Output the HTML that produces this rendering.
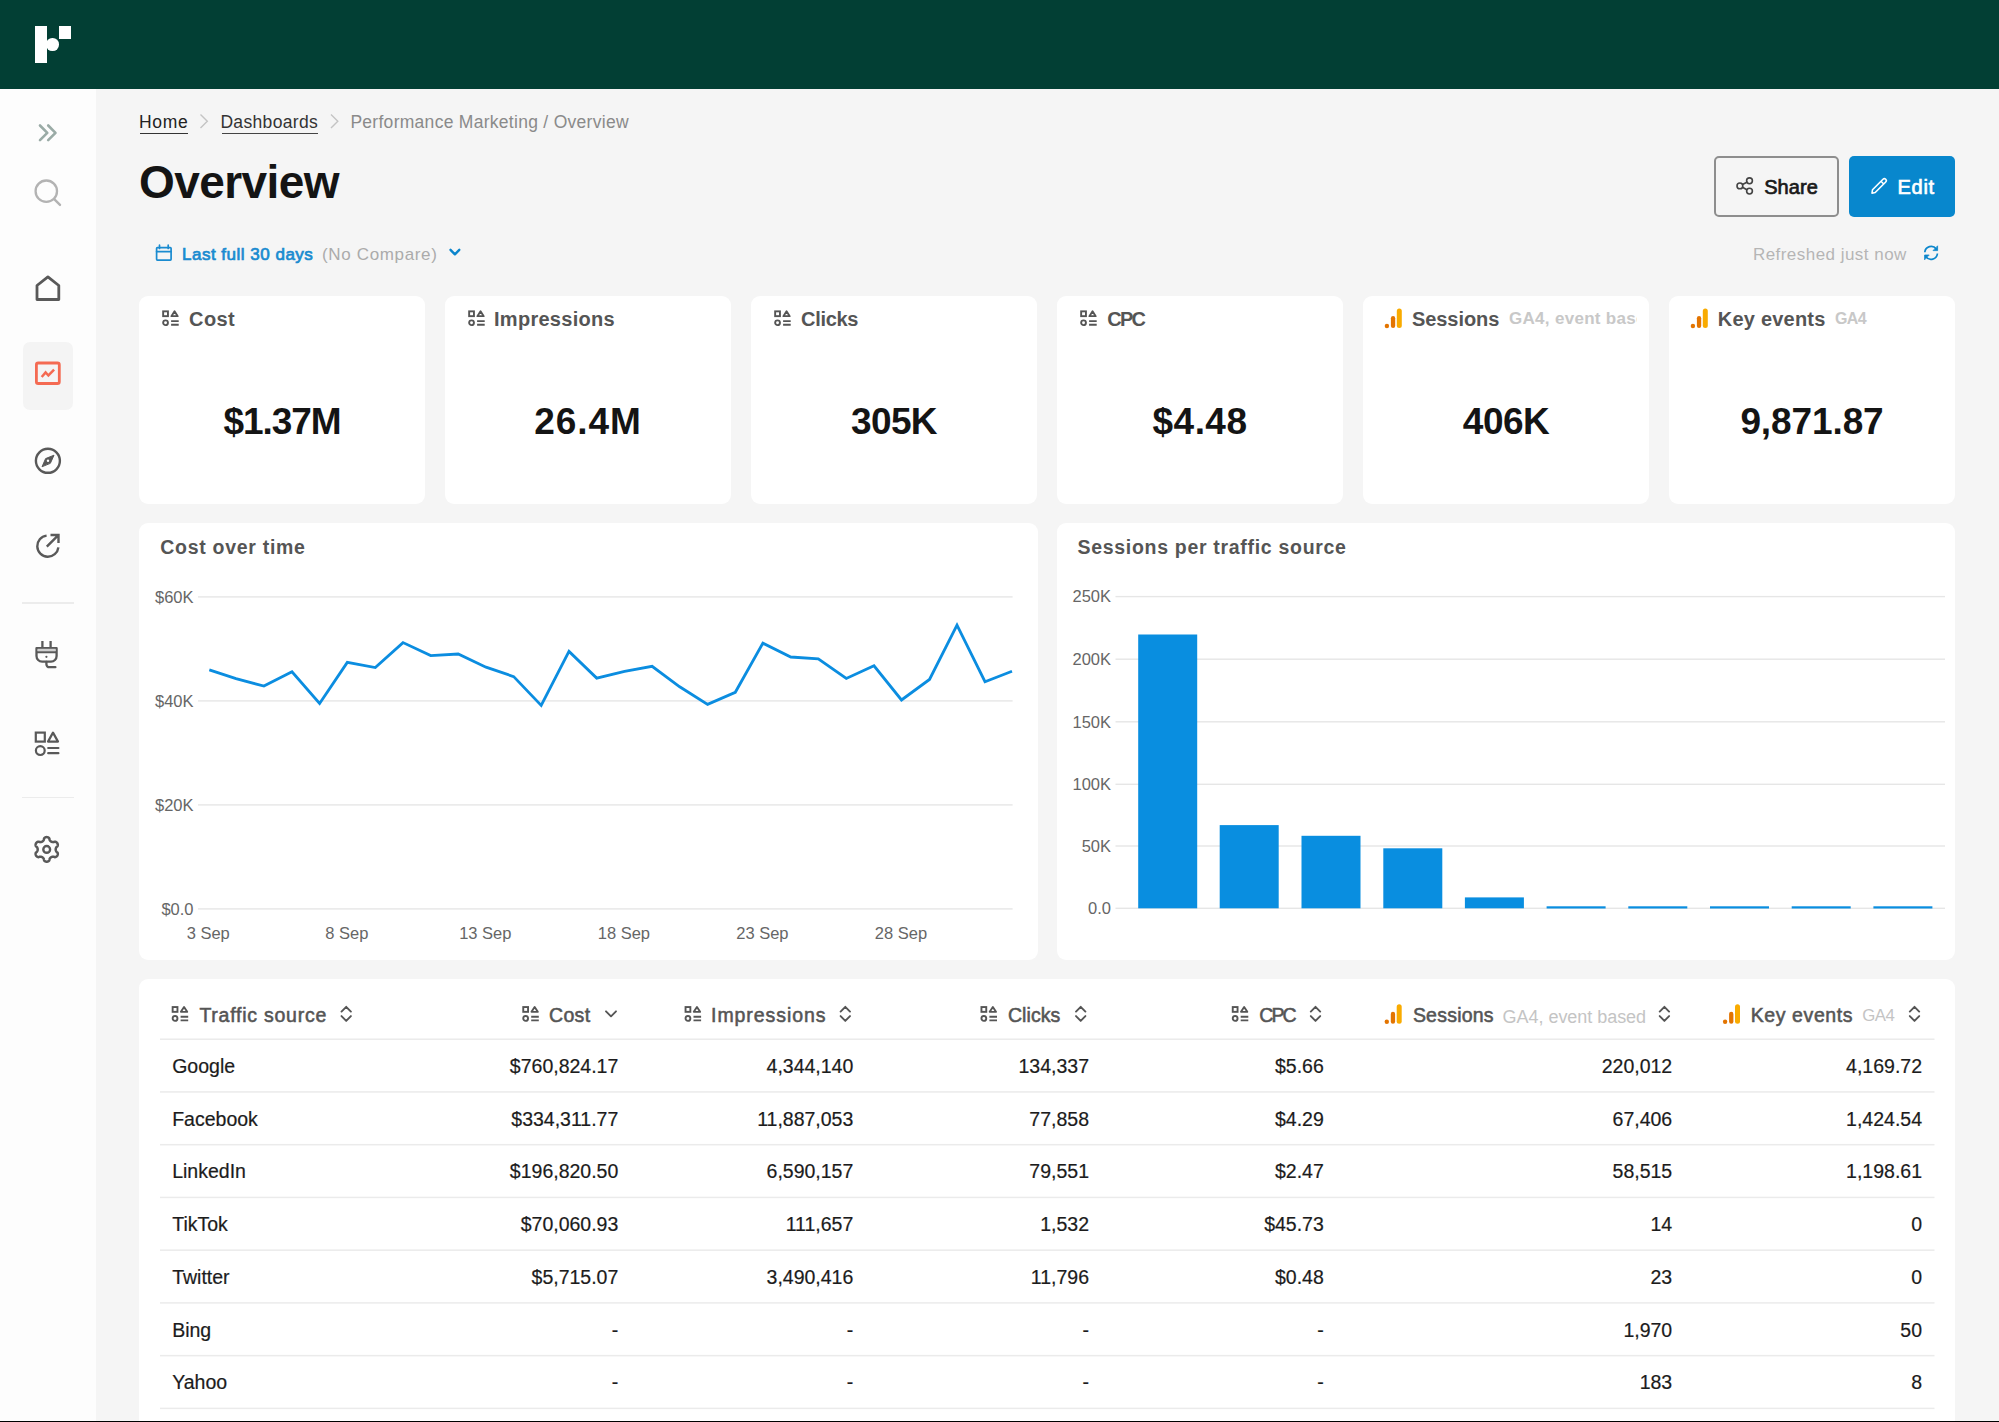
<!DOCTYPE html>
<html><head><meta charset="utf-8"><style>
*{margin:0;padding:0;box-sizing:border-box;}
html,body{width:1999px;height:1422px;overflow:hidden;background:#f5f5f5;font-family:"Liberation Sans",sans-serif;}
body{position:relative;}
.a{position:absolute;}
.t{position:absolute;white-space:nowrap;line-height:1;}
.card{position:absolute;background:#fff;border-radius:9px;}
svg{position:absolute;overflow:visible;}
</style></head><body>

<div class="a" style="left:0;top:0;width:1999px;height:89px;background:#023f34;"></div>
<div class="a" style="left:35px;top:26px;width:12px;height:37px;background:#fff"></div>
<div class="a" style="left:59px;top:26px;width:12px;height:12.5px;background:#fff"></div>
<div class="a" style="left:46.3px;top:38.2px;width:12.6px;height:12.6px;border-radius:50%;background:#fff"></div>
<div class="a" style="left:0;top:89px;width:95.5px;height:1333px;background:#fdfdfd;"></div>
<div class="a" style="left:23px;top:342px;width:50px;height:67.5px;border-radius:7px;background:#f4f4f4;"></div>
<div class="a" style="left:22px;top:602px;width:51.5px;height:1.6px;background:#ececec;"></div>
<div class="a" style="left:22px;top:796.8px;width:51.5px;height:1.6px;background:#ececec;"></div>
<svg style="left:0;top:0" width="95" height="900" viewBox="0 0 95 900">
<g fill="none" stroke-linecap="round" stroke-linejoin="round">
<path d="M40 125.5 L47.3 132.8 L40 140.1 M48.2 125.5 L55.5 132.8 L48.2 140.1" stroke="#9aaba6" stroke-width="2.6"/>
<circle cx="46.3" cy="191.2" r="10.7" stroke="#b3b3b3" stroke-width="2.3"/>
<path d="M54.2 199.1 L60 204.9" stroke="#b3b3b3" stroke-width="2.4"/>
<path d="M37 299.5 V285.5 L47.9 276.9 L58.8 285.5 V299.5 Z" stroke="#595959" stroke-width="2.8"/>
<rect x="36.4" y="363" width="22.9" height="20.5" rx="1.8" stroke="#f46a52" stroke-width="2.8"/>
<path d="M41.7 377 L45.6 372.4 L48.4 375.5 L54.1 369.7" stroke="#f46a52" stroke-width="2.5" stroke-linecap="butt" stroke-linejoin="miter"/>
<circle cx="47.9" cy="460.8" r="12" stroke="#595959" stroke-width="2.4"/>
<path d="M42.2 466.4 L45.6 458.6 L54 455.2 L50.5 463 Z" fill="#595959" stroke="#595959" stroke-width="1"/>
<circle cx="48" cy="460.8" r="1.2" fill="#fff" stroke="none"/>
<path d="M46.6 535.6 A10.6 10.6 0 1 0 58.4 547.4" stroke="#595959" stroke-width="2.4" stroke-linecap="butt"/>
<path d="M46.8 546.6 L57.6 535.8 M50.5 535 H58.5 V543" stroke="#595959" stroke-width="2.4" stroke-linecap="butt" stroke-linejoin="miter"/>
<path d="M42.4 641 V647.5 M50.6 641 V647.5" stroke="#595959" stroke-width="2.3" stroke-linecap="butt"/>
<path d="M36.5 648.2 H56.6 V656 A5.6 5.6 0 0 1 51 661.6 H42.1 A5.6 5.6 0 0 1 36.5 656 Z" stroke="#595959" stroke-width="2.3"/>
<rect x="37.6" y="648.8" width="18" height="2.6" fill="#cfcfcf" stroke="none"/><path d="M37 652.2 H56" stroke="#595959" stroke-width="2"/>
<circle cx="46.4" cy="656.8" r="1.1" fill="#595959" stroke="none"/>
<path d="M46.4 661.8 V664.2 A3 3 0 0 0 49.4 667.2 H55.4" stroke="#595959" stroke-width="2.3"/>
<rect x="35.8" y="732.6" width="9" height="9" stroke="#595959" stroke-width="2.2" stroke-linejoin="miter"/>
<path d="M53 732.6 L58 741.6 H48 Z" stroke="#595959" stroke-width="2.2"/>
<circle cx="40.3" cy="750.6" r="4.4" stroke="#595959" stroke-width="2.2"/>
<path d="M48.2 748 H58.4 M48.2 753.2 H58.4" stroke="#595959" stroke-width="2.2"/>
<path d="M46.70 837.10 L46.91 837.11 L47.13 837.13 L47.34 837.16 L47.55 837.21 L47.76 837.27 L47.97 837.35 L48.17 837.44 L48.37 837.54 L48.56 837.66 L48.75 837.80 L48.92 837.96 L49.09 838.14 L49.25 838.35 L49.39 838.60 L49.46 839.11 L49.50 839.62 L49.61 839.88 L49.72 840.09 L49.84 840.28 L49.96 840.45 L50.08 840.61 L50.19 840.75 L50.31 840.89 L50.43 841.01 L50.56 841.13 L50.68 841.24 L50.81 841.34 L50.93 841.44 L51.07 841.52 L51.20 841.61 L51.34 841.68 L51.48 841.75 L51.63 841.81 L51.78 841.87 L51.93 841.92 L52.10 841.97 L52.27 842.01 L52.44 842.05 L52.63 842.08 L52.82 842.10 L53.03 842.12 L53.25 842.13 L53.49 842.12 L53.77 842.08 L54.23 841.87 L54.70 841.67 L55.00 841.66 L55.26 841.70 L55.50 841.75 L55.72 841.83 L55.93 841.92 L56.13 842.03 L56.32 842.15 L56.50 842.28 L56.67 842.42 L56.83 842.57 L56.98 842.73 L57.11 842.89 L57.24 843.07 L57.35 843.25 L57.45 843.44 L57.54 843.63 L57.62 843.84 L57.68 844.04 L57.73 844.25 L57.77 844.47 L57.79 844.69 L57.80 844.91 L57.79 845.14 L57.77 845.37 L57.72 845.61 L57.65 845.84 L57.55 846.08 L57.40 846.33 L56.99 846.64 L56.57 846.94 L56.40 847.16 L56.27 847.37 L56.17 847.56 L56.08 847.75 L56.00 847.93 L55.94 848.10 L55.88 848.27 L55.83 848.44 L55.79 848.60 L55.76 848.77 L55.73 848.93 L55.71 849.09 L55.70 849.24 L55.70 849.40 L55.70 849.56 L55.71 849.71 L55.73 849.87 L55.76 850.03 L55.79 850.20 L55.83 850.36 L55.88 850.53 L55.94 850.70 L56.00 850.87 L56.08 851.05 L56.17 851.24 L56.27 851.43 L56.40 851.64 L56.57 851.86 L56.99 852.16 L57.40 852.47 L57.55 852.72 L57.65 852.96 L57.72 853.19 L57.77 853.43 L57.79 853.66 L57.80 853.89 L57.79 854.11 L57.77 854.33 L57.73 854.55 L57.68 854.76 L57.62 854.96 L57.54 855.17 L57.45 855.36 L57.35 855.55 L57.24 855.73 L57.11 855.91 L56.98 856.07 L56.83 856.23 L56.67 856.38 L56.50 856.52 L56.32 856.65 L56.13 856.77 L55.93 856.88 L55.72 856.97 L55.50 857.05 L55.26 857.10 L55.00 857.14 L54.70 857.13 L54.23 856.93 L53.77 856.72 L53.49 856.68 L53.25 856.67 L53.03 856.68 L52.82 856.70 L52.63 856.72 L52.44 856.75 L52.27 856.79 L52.10 856.83 L51.93 856.88 L51.78 856.93 L51.63 856.99 L51.48 857.05 L51.34 857.12 L51.20 857.19 L51.07 857.28 L50.93 857.36 L50.81 857.46 L50.68 857.56 L50.56 857.67 L50.43 857.79 L50.31 857.91 L50.19 858.05 L50.08 858.19 L49.96 858.35 L49.84 858.52 L49.72 858.71 L49.61 858.92 L49.50 859.18 L49.46 859.69 L49.39 860.20 L49.25 860.45 L49.09 860.66 L48.92 860.84 L48.75 861.00 L48.56 861.14 L48.37 861.26 L48.17 861.36 L47.97 861.45 L47.76 861.53 L47.55 861.59 L47.34 861.64 L47.13 861.67 L46.91 861.69 L46.70 861.70 L46.49 861.69 L46.27 861.67 L46.06 861.64 L45.85 861.59 L45.64 861.53 L45.43 861.45 L45.23 861.36 L45.03 861.26 L44.84 861.14 L44.65 861.00 L44.48 860.84 L44.31 860.66 L44.15 860.45 L44.01 860.20 L43.94 859.69 L43.90 859.18 L43.79 858.92 L43.68 858.71 L43.56 858.52 L43.44 858.35 L43.32 858.19 L43.21 858.05 L43.09 857.91 L42.97 857.79 L42.84 857.67 L42.72 857.56 L42.59 857.46 L42.47 857.36 L42.33 857.28 L42.20 857.19 L42.06 857.12 L41.92 857.05 L41.77 856.99 L41.62 856.93 L41.47 856.88 L41.30 856.83 L41.13 856.79 L40.96 856.75 L40.77 856.72 L40.58 856.70 L40.37 856.68 L40.15 856.67 L39.91 856.68 L39.63 856.72 L39.17 856.93 L38.70 857.13 L38.40 857.14 L38.14 857.10 L37.90 857.05 L37.68 856.97 L37.47 856.88 L37.27 856.77 L37.08 856.65 L36.90 856.52 L36.73 856.38 L36.57 856.23 L36.42 856.07 L36.29 855.91 L36.16 855.73 L36.05 855.55 L35.95 855.36 L35.86 855.17 L35.78 854.96 L35.72 854.76 L35.67 854.55 L35.63 854.33 L35.61 854.11 L35.60 853.89 L35.61 853.66 L35.63 853.43 L35.68 853.19 L35.75 852.96 L35.85 852.72 L36.00 852.47 L36.41 852.16 L36.83 851.86 L37.00 851.64 L37.13 851.43 L37.23 851.24 L37.32 851.05 L37.40 850.87 L37.46 850.70 L37.52 850.53 L37.57 850.36 L37.61 850.20 L37.64 850.03 L37.67 849.87 L37.69 849.71 L37.70 849.56 L37.70 849.40 L37.70 849.24 L37.69 849.09 L37.67 848.93 L37.64 848.77 L37.61 848.60 L37.57 848.44 L37.52 848.27 L37.46 848.10 L37.40 847.93 L37.32 847.75 L37.23 847.56 L37.13 847.37 L37.00 847.16 L36.83 846.94 L36.41 846.64 L36.00 846.33 L35.85 846.08 L35.75 845.84 L35.68 845.61 L35.63 845.37 L35.61 845.14 L35.60 844.91 L35.61 844.69 L35.63 844.47 L35.67 844.25 L35.72 844.04 L35.78 843.84 L35.86 843.63 L35.95 843.44 L36.05 843.25 L36.16 843.07 L36.29 842.89 L36.42 842.73 L36.57 842.57 L36.73 842.42 L36.90 842.28 L37.08 842.15 L37.27 842.03 L37.47 841.92 L37.68 841.83 L37.90 841.75 L38.14 841.70 L38.40 841.66 L38.70 841.67 L39.17 841.87 L39.63 842.08 L39.91 842.12 L40.15 842.13 L40.37 842.12 L40.58 842.10 L40.77 842.08 L40.96 842.05 L41.13 842.01 L41.30 841.97 L41.47 841.92 L41.62 841.87 L41.77 841.81 L41.92 841.75 L42.06 841.68 L42.20 841.61 L42.33 841.52 L42.47 841.44 L42.59 841.34 L42.72 841.24 L42.84 841.13 L42.97 841.01 L43.09 840.89 L43.21 840.75 L43.32 840.61 L43.44 840.45 L43.56 840.28 L43.68 840.09 L43.79 839.88 L43.90 839.62 L43.94 839.11 L44.01 838.60 L44.15 838.35 L44.31 838.14 L44.48 837.96 L44.65 837.80 L44.84 837.66 L45.03 837.54 L45.23 837.44 L45.43 837.35 L45.64 837.27 L45.85 837.21 L46.06 837.16 L46.27 837.13 L46.49 837.11 L46.70 837.10 Z" stroke="#595959" stroke-width="2.5"/>
<circle cx="46.7" cy="849.4" r="3.4" stroke="#595959" stroke-width="2.4"/>
</g></svg>
<div class="t" id="bc_home" style="left:139.00px;top:113.50px;font-size:17.5px;color:#222;letter-spacing:0.667px;">Home</div>
<div class="a" style="left:140px;top:132.6px;width:47.5px;height:1.6px;background:#333;"></div>
<div class="t" id="bc_dash" style="left:220.40px;top:113.50px;font-size:17.5px;color:#333;letter-spacing:0.333px;">Dashboards</div>
<div class="a" style="left:222px;top:132.6px;width:95.5px;height:1.6px;background:#444;"></div>
<div class="t" id="bc_perf" style="left:350.40px;top:113.50px;font-size:17.5px;color:#8a8a8a;letter-spacing:0.283px;">Performance Marketing / Overview</div>
<svg style="left:0;top:0" width="700" height="140"><g fill="none" stroke="#c4c4c4" stroke-width="1.4">
<path d="M200.5 114.5 L207.3 121.3 L200.5 128.1"/><path d="M331 114.5 L337.8 121.3 L331 128.1"/></g></svg>
<div class="t" id="title" style="left:139.00px;top:159.00px;font-size:46px;color:#141414;letter-spacing:-0.579px;font-weight:bold;">Overview</div>
<div class="a" style="left:1714px;top:155.5px;width:124.5px;height:61px;border:2px solid #8e8e8e;border-radius:5px;"></div>
<div class="a" style="left:1848.5px;top:155.5px;width:106.5px;height:61px;background:#0887cd;border-radius:5px;"></div>
<div class="t" id="btn_share" style="left:1764.20px;top:176.80px;font-size:20px;color:#1a1a1a;letter-spacing:0.050px;-webkit-text-stroke:0.7px #1a1a1a;">Share</div>
<div class="t" id="btn_edit" style="left:1897.60px;top:176.80px;font-size:20px;color:#ffffff;letter-spacing:0.668px;-webkit-text-stroke:0.7px #ffffff;">Edit</div>
<svg style="left:0;top:0" width="1999" height="300"><g fill="none" stroke-linecap="round" stroke-linejoin="round">
<circle cx="1749.5" cy="180.8" r="2.9" stroke="#444" stroke-width="1.6"/>
<circle cx="1739.9" cy="185.9" r="2.9" stroke="#444" stroke-width="1.6"/>
<circle cx="1749.5" cy="191.1" r="2.9" stroke="#444" stroke-width="1.6"/>
<path d="M1742.5 184.5 L1746.9 182.2 M1742.5 187.3 L1746.9 189.7" stroke="#444" stroke-width="1.6"/>
<path d="M1872.5 189.8 L1883 179.3 A1.9 1.9 0 0 1 1885.7 182 L1875.2 192.5 L1872 193.2 Z M1881 181.3 L1883.7 184" stroke="#fff" stroke-width="1.6"/>
<rect x="156.6" y="247.6" width="14.5" height="12.5" rx="0.8" stroke="#1a8bd0" stroke-width="1.7"/>
<path d="M156.6 251.6 H171.1 M159.5 245.2 V248.5 M168.2 245.2 V248.5" stroke="#1a8bd0" stroke-width="1.7"/>
<path d="M450.5 249.8 L454.9 254.3 L459.3 249.8" stroke="#0b85cc" stroke-width="2.4"/>
<path d="M1924.8 252.3 A6.4 6.4 0 0 1 1936.3 249" stroke="#0d87cc" stroke-width="1.7" stroke-linecap="butt"/>
<path d="M1937.6 246.2 V250.6 H1933.4 Z" fill="#0d87cc" stroke="#0d87cc" stroke-width="0.8"/>
<path d="M1937.4 253.5 A6.4 6.4 0 0 1 1925.9 256.8" stroke="#0d87cc" stroke-width="1.7" stroke-linecap="butt"/>
<path d="M1924.6 259.4 V255 H1928.8 Z" fill="#0d87cc" stroke="#0d87cc" stroke-width="0.8"/>
</g></svg>
<div class="t" id="date_last" style="left:182.00px;top:245.50px;font-size:17px;color:#1a8bd0;letter-spacing:0.500px;-webkit-text-stroke:0.7px #1a8bd0;">Last full 30 days</div>
<div class="t" id="date_nocomp" style="left:322.00px;top:245.50px;font-size:17px;color:#ababab;letter-spacing:0.653px;">(No Compare)</div>
<div class="t" id="refreshed" style="left:1752.90px;top:245.50px;font-size:17px;color:#b5b5b5;letter-spacing:0.466px;">Refreshed just now</div>
<div class="card" style="left:139px;top:296px;width:286px;height:208px;"></div>
<div class="t" id="kpi_t0" style="left:189.00px;top:309.30px;font-size:20px;color:#555;letter-spacing:0.433px;font-weight:bold;">Cost</div>
<div class="t" style="left:139px;width:286px;text-align:center;top:403px;font-size:37px;font-weight:bold;color:#141414;letter-spacing:-1.1px;">$1.37M</div>
<div class="card" style="left:445px;top:296px;width:286px;height:208px;"></div>
<div class="t" id="kpi_t1" style="left:494.00px;top:309.30px;font-size:20px;color:#555;letter-spacing:0.280px;font-weight:bold;">Impressions</div>
<div class="t" style="left:445px;width:286px;text-align:center;top:403px;font-size:37px;font-weight:bold;color:#141414;letter-spacing:0.9px;">26.4M</div>
<div class="card" style="left:751px;top:296px;width:286px;height:208px;"></div>
<div class="t" id="kpi_t2" style="left:801.00px;top:309.30px;font-size:20px;color:#555;letter-spacing:-0.300px;font-weight:bold;">Clicks</div>
<div class="t" style="left:751px;width:286px;text-align:center;top:403px;font-size:37px;font-weight:bold;color:#141414;letter-spacing:-0.67px;">305K</div>
<div class="card" style="left:1057px;top:296px;width:286px;height:208px;"></div>
<div class="t" id="kpi_t3" style="left:1107.20px;top:309.30px;font-size:20px;color:#555;letter-spacing:-1.700px;font-weight:bold;">CPC</div>
<div class="t" style="left:1057px;width:286px;text-align:center;top:403px;font-size:37px;font-weight:bold;color:#141414;letter-spacing:0.45px;">$4.48</div>
<div class="card" style="left:1363px;top:296px;width:286px;height:208px;"></div>
<div class="t" id="kpi_t4" style="left:1412.00px;top:309.30px;font-size:20px;color:#555;letter-spacing:-0.073px;font-weight:bold;">Sessions</div>
<div class="a" style="left:1363px;top:296px;width:274px;height:60px;overflow:hidden;"><div class="t" id="kpi_ga0" style="left:146.00px;top:13.80px;font-size:17px;color:#c8c8c8;letter-spacing:0.300px;font-weight:bold;">GA4, event based</div>
</div>
<div class="t" style="left:1363px;width:286px;text-align:center;top:403px;font-size:37px;font-weight:bold;color:#141414;letter-spacing:-0.55px;">406K</div>
<div class="card" style="left:1669px;top:296px;width:286px;height:208px;"></div>
<div class="t" id="kpi_t5" style="left:1717.80px;top:309.30px;font-size:20px;color:#555;letter-spacing:0.211px;font-weight:bold;">Key events</div>
<div class="t" id="kpi_ga1" style="left:1835.00px;top:310.80px;font-size:16px;color:#c8c8c8;letter-spacing:-0.600px;font-weight:bold;">GA4</div>
<div class="t" style="left:1669px;width:286px;text-align:center;top:403px;font-size:37px;font-weight:bold;color:#141414;letter-spacing:-0.1px;">9,871.87</div>
<svg style="left:0;top:0" width="1999" height="600"><g transform="translate(162.2,310.4) scale(1.0)" fill="none" stroke="#555" stroke-width="1.9" stroke-linejoin="miter">
<rect x="0.95" y="0.95" width="4.8" height="4.8"/>
<path d="M12.35 0.9 L15.5 5.75 H9.2 Z" stroke-linejoin="round"/>
<circle cx="3.35" cy="12.35" r="2.4"/>
<path d="M8.9 10.7 H16.5 M8.9 14.3 H16.5"/>
</g><g transform="translate(468.2,310.4) scale(1.0)" fill="none" stroke="#555" stroke-width="1.9" stroke-linejoin="miter">
<rect x="0.95" y="0.95" width="4.8" height="4.8"/>
<path d="M12.35 0.9 L15.5 5.75 H9.2 Z" stroke-linejoin="round"/>
<circle cx="3.35" cy="12.35" r="2.4"/>
<path d="M8.9 10.7 H16.5 M8.9 14.3 H16.5"/>
</g><g transform="translate(774.2,310.4) scale(1.0)" fill="none" stroke="#555" stroke-width="1.9" stroke-linejoin="miter">
<rect x="0.95" y="0.95" width="4.8" height="4.8"/>
<path d="M12.35 0.9 L15.5 5.75 H9.2 Z" stroke-linejoin="round"/>
<circle cx="3.35" cy="12.35" r="2.4"/>
<path d="M8.9 10.7 H16.5 M8.9 14.3 H16.5"/>
</g><g transform="translate(1080.2,310.4) scale(1.0)" fill="none" stroke="#555" stroke-width="1.9" stroke-linejoin="miter">
<rect x="0.95" y="0.95" width="4.8" height="4.8"/>
<path d="M12.35 0.9 L15.5 5.75 H9.2 Z" stroke-linejoin="round"/>
<circle cx="3.35" cy="12.35" r="2.4"/>
<path d="M8.9 10.7 H16.5 M8.9 14.3 H16.5"/>
</g><g transform="translate(1384.7,308.5)">
<circle cx="2.2" cy="17.5" r="2.2" fill="#e37400"/>
<rect x="6.2" y="7.6" width="4.3" height="12" rx="2.15" fill="#e37400"/>
<rect x="12.1" y="0" width="5" height="19.6" rx="2.5" fill="#f9ab00"/>
</g><g transform="translate(1690.7,308.5)">
<circle cx="2.2" cy="17.5" r="2.2" fill="#e37400"/>
<rect x="6.2" y="7.6" width="4.3" height="12" rx="2.15" fill="#e37400"/>
<rect x="12.1" y="0" width="5" height="19.6" rx="2.5" fill="#f9ab00"/>
</g></svg>
<div class="card" style="left:139px;top:523px;width:898.5px;height:436.5px;"></div>
<div class="card" style="left:1057px;top:523px;width:898px;height:436.5px;"></div>
<div class="t" id="ch_t1" style="left:160.30px;top:537.80px;font-size:19.5px;color:#555;letter-spacing:0.704px;font-weight:bold;">Cost over time</div>
<div class="t" id="ch_t2" style="left:1077.50px;top:537.80px;font-size:19.5px;color:#555;letter-spacing:0.696px;font-weight:bold;">Sessions per traffic source</div>
<svg style="left:0;top:0" width="1999" height="1000"><g><rect x="198" y="596.2" width="814.6" height="1.4" fill="#e6e6e6"/><rect x="198" y="700.2" width="814.6" height="1.4" fill="#e6e6e6"/><rect x="198" y="804.2" width="814.6" height="1.4" fill="#e6e6e6"/><rect x="198" y="908.2" width="814.6" height="1.4" fill="#e6e6e6"/><rect x="1115.5" y="595.9" width="829.5" height="1.4" fill="#e6e6e6"/><rect x="1115.5" y="658.5" width="829.5" height="1.4" fill="#e6e6e6"/><rect x="1115.5" y="721.1" width="829.5" height="1.4" fill="#e6e6e6"/><rect x="1115.5" y="783.6" width="829.5" height="1.4" fill="#e6e6e6"/><rect x="1115.5" y="845.3" width="829.5" height="1.4" fill="#e6e6e6"/><rect x="1115.5" y="907.6" width="829.5" height="1.4" fill="#e6e6e6"/><polyline points="209.3,669.9 236.0,678.7 263.9,686.1 292.0,671.8 319.6,703.5 347.3,662.4 375.3,667.6 403.0,642.6 430.7,655.6 458.2,654.0 486.0,667.2 513.7,676.6 541.2,705.4 569.0,651.4 596.7,678.1 624.6,671.3 652.1,666.3 679.7,686.8 707.6,704.4 735.3,692.3 762.9,643.2 790.8,657.0 818.3,658.8 846.3,678.4 874.0,665.8 901.5,700.0 929.5,679.5 957.0,625.1 985.0,681.7 1012.0,671.3" fill="none" stroke="#0b8de0" stroke-width="2.8" stroke-linejoin="miter" stroke-miterlimit="4"/><rect x="1138.2" y="634.5" width="59" height="273.8" fill="#098ee0"/><rect x="1219.7" y="825.1" width="59" height="83.2" fill="#098ee0"/><rect x="1301.5" y="835.8" width="59" height="72.5" fill="#098ee0"/><rect x="1383.3" y="848.3" width="59" height="60.0" fill="#098ee0"/><rect x="1464.9" y="897.4" width="59" height="10.9" fill="#098ee0"/><rect x="1546.6" y="906.3" width="59" height="2.2" fill="#098ee0"/><rect x="1628.3" y="906.3" width="59" height="2.2" fill="#098ee0"/><rect x="1710.0" y="906.3" width="59" height="2.2" fill="#098ee0"/><rect x="1791.7" y="906.3" width="59" height="2.2" fill="#098ee0"/><rect x="1873.4" y="906.3" width="59" height="2.2" fill="#098ee0"/></g></svg>
<div class="t" style="left:100px;width:93.5px;text-align:right;top:588.6px;font-size:16.5px;color:#666;">$60K</div>
<div class="t" style="left:100px;width:93.5px;text-align:right;top:692.6px;font-size:16.5px;color:#666;">$40K</div>
<div class="t" style="left:100px;width:93.5px;text-align:right;top:796.6px;font-size:16.5px;color:#666;">$20K</div>
<div class="t" style="left:100px;width:93.5px;text-align:right;top:900.6px;font-size:16.5px;color:#666;">$0.0</div>
<div class="t" style="left:158.2px;width:100px;text-align:center;top:924.9px;font-size:16.5px;color:#666;">3 Sep</div>
<div class="t" style="left:296.8px;width:100px;text-align:center;top:924.9px;font-size:16.5px;color:#666;">8 Sep</div>
<div class="t" style="left:435.3px;width:100px;text-align:center;top:924.9px;font-size:16.5px;color:#666;">13 Sep</div>
<div class="t" style="left:573.9px;width:100px;text-align:center;top:924.9px;font-size:16.5px;color:#666;">18 Sep</div>
<div class="t" style="left:712.4px;width:100px;text-align:center;top:924.9px;font-size:16.5px;color:#666;">23 Sep</div>
<div class="t" style="left:851.0px;width:100px;text-align:center;top:924.9px;font-size:16.5px;color:#666;">28 Sep</div>
<div class="t" style="left:1011px;width:100px;text-align:right;top:588.3px;font-size:16.5px;color:#666;">250K</div>
<div class="t" style="left:1011px;width:100px;text-align:right;top:650.9px;font-size:16.5px;color:#666;">200K</div>
<div class="t" style="left:1011px;width:100px;text-align:right;top:713.5px;font-size:16.5px;color:#666;">150K</div>
<div class="t" style="left:1011px;width:100px;text-align:right;top:776.0px;font-size:16.5px;color:#666;">100K</div>
<div class="t" style="left:1011px;width:100px;text-align:right;top:837.7px;font-size:16.5px;color:#666;">50K</div>
<div class="t" style="left:1011px;width:100px;text-align:right;top:900.0px;font-size:16.5px;color:#666;">0.0</div>
<div class="card" style="left:139px;top:979px;width:1816px;height:460px;"></div>
<svg style="left:0;top:0" width="1999" height="1422"><g><rect x="160" y="1038.45" width="1774.5" height="1.5" fill="#ebebeb"/><rect x="160" y="1091.19" width="1774.5" height="1.5" fill="#ebebeb"/><rect x="160" y="1143.93" width="1774.5" height="1.5" fill="#ebebeb"/><rect x="160" y="1196.67" width="1774.5" height="1.5" fill="#ebebeb"/><rect x="160" y="1249.41" width="1774.5" height="1.5" fill="#ebebeb"/><rect x="160" y="1302.15" width="1774.5" height="1.5" fill="#ebebeb"/><rect x="160" y="1354.89" width="1774.5" height="1.5" fill="#ebebeb"/><rect x="160" y="1407.63" width="1774.5" height="1.5" fill="#ebebeb"/><g transform="translate(171.7,1006.1) scale(1.0)" fill="none" stroke="#555" stroke-width="1.9" stroke-linejoin="miter">
<rect x="0.95" y="0.95" width="4.8" height="4.8"/>
<path d="M12.35 0.9 L15.5 5.75 H9.2 Z" stroke-linejoin="round"/>
<circle cx="3.35" cy="12.35" r="2.4"/>
<path d="M8.9 10.7 H16.5 M8.9 14.3 H16.5"/>
</g><g transform="translate(522.3,1006.1) scale(1.0)" fill="none" stroke="#555" stroke-width="1.9" stroke-linejoin="miter">
<rect x="0.95" y="0.95" width="4.8" height="4.8"/>
<path d="M12.35 0.9 L15.5 5.75 H9.2 Z" stroke-linejoin="round"/>
<circle cx="3.35" cy="12.35" r="2.4"/>
<path d="M8.9 10.7 H16.5 M8.9 14.3 H16.5"/>
</g><g transform="translate(684.6,1006.1) scale(1.0)" fill="none" stroke="#555" stroke-width="1.9" stroke-linejoin="miter">
<rect x="0.95" y="0.95" width="4.8" height="4.8"/>
<path d="M12.35 0.9 L15.5 5.75 H9.2 Z" stroke-linejoin="round"/>
<circle cx="3.35" cy="12.35" r="2.4"/>
<path d="M8.9 10.7 H16.5 M8.9 14.3 H16.5"/>
</g><g transform="translate(980.5,1006.1) scale(1.0)" fill="none" stroke="#555" stroke-width="1.9" stroke-linejoin="miter">
<rect x="0.95" y="0.95" width="4.8" height="4.8"/>
<path d="M12.35 0.9 L15.5 5.75 H9.2 Z" stroke-linejoin="round"/>
<circle cx="3.35" cy="12.35" r="2.4"/>
<path d="M8.9 10.7 H16.5 M8.9 14.3 H16.5"/>
</g><g transform="translate(1231.8,1006.1) scale(1.0)" fill="none" stroke="#555" stroke-width="1.9" stroke-linejoin="miter">
<rect x="0.95" y="0.95" width="4.8" height="4.8"/>
<path d="M12.35 0.9 L15.5 5.75 H9.2 Z" stroke-linejoin="round"/>
<circle cx="3.35" cy="12.35" r="2.4"/>
<path d="M8.9 10.7 H16.5 M8.9 14.3 H16.5"/>
</g><g transform="translate(1384.6,1004.2)">
<circle cx="2.2" cy="17.5" r="2.2" fill="#e37400"/>
<rect x="6.2" y="7.6" width="4.3" height="12" rx="2.15" fill="#e37400"/>
<rect x="12.1" y="0" width="5" height="19.6" rx="2.5" fill="#f9ab00"/>
</g><g transform="translate(1722.9,1004.2)">
<circle cx="2.2" cy="17.5" r="2.2" fill="#e37400"/>
<rect x="6.2" y="7.6" width="4.3" height="12" rx="2.15" fill="#e37400"/>
<rect x="12.1" y="0" width="5" height="19.6" rx="2.5" fill="#f9ab00"/>
</g><path transform="translate(340.5,1005.6)" d="M1 6 L5.7 1.2 L10.4 6 M1 10.5 L5.7 15.3 L10.4 10.5" fill="none" stroke="#555" stroke-width="1.9" stroke-linecap="round" stroke-linejoin="round"/><path transform="translate(839.6,1005.6)" d="M1 6 L5.7 1.2 L10.4 6 M1 10.5 L5.7 15.3 L10.4 10.5" fill="none" stroke="#555" stroke-width="1.9" stroke-linecap="round" stroke-linejoin="round"/><path transform="translate(1075,1005.6)" d="M1 6 L5.7 1.2 L10.4 6 M1 10.5 L5.7 15.3 L10.4 10.5" fill="none" stroke="#555" stroke-width="1.9" stroke-linecap="round" stroke-linejoin="round"/><path transform="translate(1309.8,1005.6)" d="M1 6 L5.7 1.2 L10.4 6 M1 10.5 L5.7 15.3 L10.4 10.5" fill="none" stroke="#555" stroke-width="1.9" stroke-linecap="round" stroke-linejoin="round"/><path transform="translate(1658.7,1005.6)" d="M1 6 L5.7 1.2 L10.4 6 M1 10.5 L5.7 15.3 L10.4 10.5" fill="none" stroke="#555" stroke-width="1.9" stroke-linecap="round" stroke-linejoin="round"/><path transform="translate(1908.8,1005.6)" d="M1 6 L5.7 1.2 L10.4 6 M1 10.5 L5.7 15.3 L10.4 10.5" fill="none" stroke="#555" stroke-width="1.9" stroke-linecap="round" stroke-linejoin="round"/><path transform="translate(605.0,1010.3)" d="M1 1 L6 6 L11 1" fill="none" stroke="#555" stroke-width="1.9" stroke-linecap="round" stroke-linejoin="round"/></g></svg>
<div class="t" id="th_src" style="left:199.40px;top:1006.30px;font-size:19.5px;color:#555;letter-spacing:0.756px;-webkit-text-stroke:0.55px #555;">Traffic source</div>
<div class="t" id="th_cost" style="left:549.00px;top:1006.30px;font-size:19.5px;color:#555;letter-spacing:0.333px;-webkit-text-stroke:0.55px #555;">Cost</div>
<div class="t" id="th_imp" style="left:711.10px;top:1006.30px;font-size:19.5px;color:#555;letter-spacing:0.920px;-webkit-text-stroke:0.55px #555;">Impressions</div>
<div class="t" id="th_clicks" style="left:1007.90px;top:1006.30px;font-size:19.5px;color:#555;letter-spacing:0.080px;-webkit-text-stroke:0.55px #555;">Clicks</div>
<div class="t" id="th_cpc" style="left:1259.30px;top:1006.30px;font-size:19.5px;color:#555;letter-spacing:-2.000px;-webkit-text-stroke:0.55px #555;">CPC</div>
<div class="t" id="th_sess" style="left:1412.90px;top:1006.30px;font-size:19.5px;color:#555;letter-spacing:0.227px;-webkit-text-stroke:0.55px #555;">Sessions</div>
<div class="t" id="th_ga0" style="left:1502.60px;top:1007.50px;font-size:18px;color:#c4c4c4;letter-spacing:-0.041px;">GA4, event based</div>
<div class="t" id="th_key" style="left:1750.70px;top:1006.30px;font-size:19.5px;color:#555;letter-spacing:0.600px;-webkit-text-stroke:0.55px #555;">Key events</div>
<div class="t" id="th_ga1" style="left:1862.30px;top:1008.40px;font-size:16.8px;color:#c4c4c4;letter-spacing:-0.500px;">GA4</div>
<div class="t" style="left:172.2px;top:1056.8px;font-size:19.5px;color:#1c1c1c;-webkit-text-stroke:0.2px #1c1c1c;">Google</div>
<div class="t" style="left:318.3px;width:300px;text-align:right;top:1056.8px;font-size:19.5px;color:#1c1c1c;-webkit-text-stroke:0.2px #1c1c1c;">$760,824.17</div>
<div class="t" style="left:553.3px;width:300px;text-align:right;top:1056.8px;font-size:19.5px;color:#1c1c1c;-webkit-text-stroke:0.2px #1c1c1c;">4,344,140</div>
<div class="t" style="left:789.0px;width:300px;text-align:right;top:1056.8px;font-size:19.5px;color:#1c1c1c;-webkit-text-stroke:0.2px #1c1c1c;">134,337</div>
<div class="t" style="left:1023.8px;width:300px;text-align:right;top:1056.8px;font-size:19.5px;color:#1c1c1c;-webkit-text-stroke:0.2px #1c1c1c;">$5.66</div>
<div class="t" style="left:1372.2px;width:300px;text-align:right;top:1056.8px;font-size:19.5px;color:#1c1c1c;-webkit-text-stroke:0.2px #1c1c1c;">220,012</div>
<div class="t" style="left:1622.0px;width:300px;text-align:right;top:1056.8px;font-size:19.5px;color:#1c1c1c;-webkit-text-stroke:0.2px #1c1c1c;">4,169.72</div>
<div class="t" style="left:172.2px;top:1109.6px;font-size:19.5px;color:#1c1c1c;-webkit-text-stroke:0.2px #1c1c1c;">Facebook</div>
<div class="t" style="left:318.3px;width:300px;text-align:right;top:1109.6px;font-size:19.5px;color:#1c1c1c;-webkit-text-stroke:0.2px #1c1c1c;">$334,311.77</div>
<div class="t" style="left:553.3px;width:300px;text-align:right;top:1109.6px;font-size:19.5px;color:#1c1c1c;-webkit-text-stroke:0.2px #1c1c1c;">11,887,053</div>
<div class="t" style="left:789.0px;width:300px;text-align:right;top:1109.6px;font-size:19.5px;color:#1c1c1c;-webkit-text-stroke:0.2px #1c1c1c;">77,858</div>
<div class="t" style="left:1023.8px;width:300px;text-align:right;top:1109.6px;font-size:19.5px;color:#1c1c1c;-webkit-text-stroke:0.2px #1c1c1c;">$4.29</div>
<div class="t" style="left:1372.2px;width:300px;text-align:right;top:1109.6px;font-size:19.5px;color:#1c1c1c;-webkit-text-stroke:0.2px #1c1c1c;">67,406</div>
<div class="t" style="left:1622.0px;width:300px;text-align:right;top:1109.6px;font-size:19.5px;color:#1c1c1c;-webkit-text-stroke:0.2px #1c1c1c;">1,424.54</div>
<div class="t" style="left:172.2px;top:1162.3px;font-size:19.5px;color:#1c1c1c;-webkit-text-stroke:0.2px #1c1c1c;">LinkedIn</div>
<div class="t" style="left:318.3px;width:300px;text-align:right;top:1162.3px;font-size:19.5px;color:#1c1c1c;-webkit-text-stroke:0.2px #1c1c1c;">$196,820.50</div>
<div class="t" style="left:553.3px;width:300px;text-align:right;top:1162.3px;font-size:19.5px;color:#1c1c1c;-webkit-text-stroke:0.2px #1c1c1c;">6,590,157</div>
<div class="t" style="left:789.0px;width:300px;text-align:right;top:1162.3px;font-size:19.5px;color:#1c1c1c;-webkit-text-stroke:0.2px #1c1c1c;">79,551</div>
<div class="t" style="left:1023.8px;width:300px;text-align:right;top:1162.3px;font-size:19.5px;color:#1c1c1c;-webkit-text-stroke:0.2px #1c1c1c;">$2.47</div>
<div class="t" style="left:1372.2px;width:300px;text-align:right;top:1162.3px;font-size:19.5px;color:#1c1c1c;-webkit-text-stroke:0.2px #1c1c1c;">58,515</div>
<div class="t" style="left:1622.0px;width:300px;text-align:right;top:1162.3px;font-size:19.5px;color:#1c1c1c;-webkit-text-stroke:0.2px #1c1c1c;">1,198.61</div>
<div class="t" style="left:172.2px;top:1215.1px;font-size:19.5px;color:#1c1c1c;-webkit-text-stroke:0.2px #1c1c1c;">TikTok</div>
<div class="t" style="left:318.3px;width:300px;text-align:right;top:1215.1px;font-size:19.5px;color:#1c1c1c;-webkit-text-stroke:0.2px #1c1c1c;">$70,060.93</div>
<div class="t" style="left:553.3px;width:300px;text-align:right;top:1215.1px;font-size:19.5px;color:#1c1c1c;-webkit-text-stroke:0.2px #1c1c1c;">111,657</div>
<div class="t" style="left:789.0px;width:300px;text-align:right;top:1215.1px;font-size:19.5px;color:#1c1c1c;-webkit-text-stroke:0.2px #1c1c1c;">1,532</div>
<div class="t" style="left:1023.8px;width:300px;text-align:right;top:1215.1px;font-size:19.5px;color:#1c1c1c;-webkit-text-stroke:0.2px #1c1c1c;">$45.73</div>
<div class="t" style="left:1372.2px;width:300px;text-align:right;top:1215.1px;font-size:19.5px;color:#1c1c1c;-webkit-text-stroke:0.2px #1c1c1c;">14</div>
<div class="t" style="left:1622.0px;width:300px;text-align:right;top:1215.1px;font-size:19.5px;color:#1c1c1c;-webkit-text-stroke:0.2px #1c1c1c;">0</div>
<div class="t" style="left:172.2px;top:1267.8px;font-size:19.5px;color:#1c1c1c;-webkit-text-stroke:0.2px #1c1c1c;">Twitter</div>
<div class="t" style="left:318.3px;width:300px;text-align:right;top:1267.8px;font-size:19.5px;color:#1c1c1c;-webkit-text-stroke:0.2px #1c1c1c;">$5,715.07</div>
<div class="t" style="left:553.3px;width:300px;text-align:right;top:1267.8px;font-size:19.5px;color:#1c1c1c;-webkit-text-stroke:0.2px #1c1c1c;">3,490,416</div>
<div class="t" style="left:789.0px;width:300px;text-align:right;top:1267.8px;font-size:19.5px;color:#1c1c1c;-webkit-text-stroke:0.2px #1c1c1c;">11,796</div>
<div class="t" style="left:1023.8px;width:300px;text-align:right;top:1267.8px;font-size:19.5px;color:#1c1c1c;-webkit-text-stroke:0.2px #1c1c1c;">$0.48</div>
<div class="t" style="left:1372.2px;width:300px;text-align:right;top:1267.8px;font-size:19.5px;color:#1c1c1c;-webkit-text-stroke:0.2px #1c1c1c;">23</div>
<div class="t" style="left:1622.0px;width:300px;text-align:right;top:1267.8px;font-size:19.5px;color:#1c1c1c;-webkit-text-stroke:0.2px #1c1c1c;">0</div>
<div class="t" style="left:172.2px;top:1320.5px;font-size:19.5px;color:#1c1c1c;-webkit-text-stroke:0.2px #1c1c1c;">Bing</div>
<div class="t" style="left:318.3px;width:300px;text-align:right;top:1320.5px;font-size:19.5px;color:#1c1c1c;-webkit-text-stroke:0.2px #1c1c1c;">-</div>
<div class="t" style="left:553.3px;width:300px;text-align:right;top:1320.5px;font-size:19.5px;color:#1c1c1c;-webkit-text-stroke:0.2px #1c1c1c;">-</div>
<div class="t" style="left:789.0px;width:300px;text-align:right;top:1320.5px;font-size:19.5px;color:#1c1c1c;-webkit-text-stroke:0.2px #1c1c1c;">-</div>
<div class="t" style="left:1023.8px;width:300px;text-align:right;top:1320.5px;font-size:19.5px;color:#1c1c1c;-webkit-text-stroke:0.2px #1c1c1c;">-</div>
<div class="t" style="left:1372.2px;width:300px;text-align:right;top:1320.5px;font-size:19.5px;color:#1c1c1c;-webkit-text-stroke:0.2px #1c1c1c;">1,970</div>
<div class="t" style="left:1622.0px;width:300px;text-align:right;top:1320.5px;font-size:19.5px;color:#1c1c1c;-webkit-text-stroke:0.2px #1c1c1c;">50</div>
<div class="t" style="left:172.2px;top:1373.3px;font-size:19.5px;color:#1c1c1c;-webkit-text-stroke:0.2px #1c1c1c;">Yahoo</div>
<div class="t" style="left:318.3px;width:300px;text-align:right;top:1373.3px;font-size:19.5px;color:#1c1c1c;-webkit-text-stroke:0.2px #1c1c1c;">-</div>
<div class="t" style="left:553.3px;width:300px;text-align:right;top:1373.3px;font-size:19.5px;color:#1c1c1c;-webkit-text-stroke:0.2px #1c1c1c;">-</div>
<div class="t" style="left:789.0px;width:300px;text-align:right;top:1373.3px;font-size:19.5px;color:#1c1c1c;-webkit-text-stroke:0.2px #1c1c1c;">-</div>
<div class="t" style="left:1023.8px;width:300px;text-align:right;top:1373.3px;font-size:19.5px;color:#1c1c1c;-webkit-text-stroke:0.2px #1c1c1c;">-</div>
<div class="t" style="left:1372.2px;width:300px;text-align:right;top:1373.3px;font-size:19.5px;color:#1c1c1c;-webkit-text-stroke:0.2px #1c1c1c;">183</div>
<div class="t" style="left:1622.0px;width:300px;text-align:right;top:1373.3px;font-size:19.5px;color:#1c1c1c;-webkit-text-stroke:0.2px #1c1c1c;">8</div>
<div class="a" style="left:0;top:1420.5px;width:1999px;height:1.5px;background:#000;"></div>
</body></html>
